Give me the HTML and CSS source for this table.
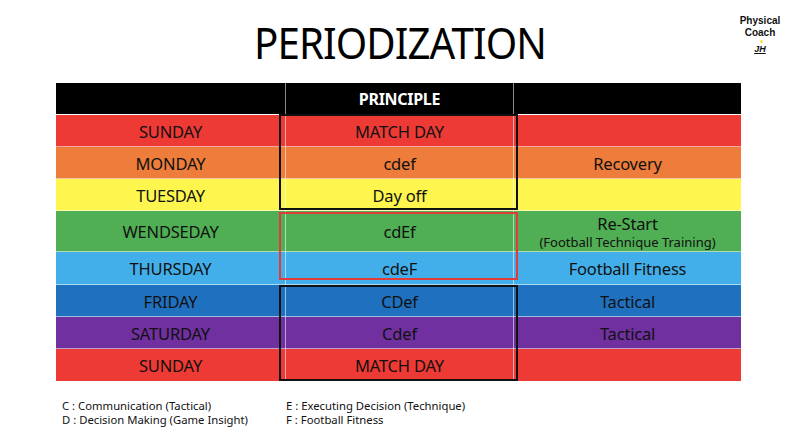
FILE: index.html
```html
<!DOCTYPE html>
<html>
<head>
<meta charset="utf-8">
<link rel="stylesheet" href="styles.css">
</head>
<body>
<div class="slide">
  <div class="coach">
    <div>Physical</div>
    <div>Coach</div>
    <div class="jh"><span class="dot"></span>JH</div>
  </div>
  <h1 class="title">PERIODIZATION</h1>
  <div class="table">
    <div class="row head"><div class="cell"></div><div class="cell mid">PRINCIPLE</div><div class="cell"></div></div>
    <div class="row red"><div class="cell">SUNDAY</div><div class="cell mid">MATCH DAY</div><div class="cell"></div></div>
    <div class="row orange"><div class="cell">MONDAY</div><div class="cell mid">cdef</div><div class="cell">Recovery</div></div>
    <div class="row yellow"><div class="cell">TUESDAY</div><div class="cell mid">Day off</div><div class="cell"></div></div>
    <div class="row green tall"><div class="cell">WENDSEDAY</div><div class="cell mid">cdEf</div><div class="cell stack"><span class="main">Re-Start</span><span class="sub">(Football Technique Training)</span></div></div>
    <div class="row sky thu"><div class="cell">THURSDAY</div><div class="cell mid">cdeF</div><div class="cell">Football Fitness</div></div>
    <div class="row blue"><div class="cell">FRIDAY</div><div class="cell mid">CDef</div><div class="cell">Tactical</div></div>
    <div class="row purple"><div class="cell">SATURDAY</div><div class="cell mid">Cdef</div><div class="cell">Tactical</div></div>
    <div class="row red last"><div class="cell">SUNDAY</div><div class="cell mid">MATCH DAY</div><div class="cell"></div></div>
    <div class="box box1"></div>
    <div class="box box2"></div>
    <div class="box box3"></div>
  </div>
  <div class="legend">
    <div class="col">
      <div>C : Communication (Tactical)</div>
      <div>D : Decision Making (Game Insight)</div>
    </div>
    <div class="col">
      <div>E : Executing Decision (Technique)</div>
      <div>F : Football Fitness</div>
    </div>
  </div>
</div>
</body>
</html>
```
FILE: styles.css
```css
html, body { margin: 0; padding: 0; background: #fff; }
.slide {
  width: 800px; height: 446px; position: relative; overflow: hidden;
  font-family: "Noto Sans", "Open Sans", sans-serif; color: #111;
}
.coach {
  position: absolute; top: 15px; left: 730px; width: 60px;
  text-align: center; font-family: "Liberation Sans", Arial, sans-serif;
  font-weight: bold; font-size: 10px; line-height: 12px; color: #111;
}
.coach .jh { font-style: italic; font-size: 9px; text-decoration: underline; margin-top: 4px; position: relative; }
.coach .dot { position: absolute; left: 30px; top: -3px; width: 3px; height: 3px; border-radius: 50%; background: #f5e332; }
.title {
  margin: 0; padding-top: 14px; height: 83px; box-sizing: border-box;
  text-align: center; font-weight: 400; font-size: 44px; line-height: 56px;
  letter-spacing: -1px; color: #000; transform: scaleX(0.915);
}
.table { position: relative; margin-left: 56px; width: 685px; }
.row { display: grid; grid-template-columns: 229px 229px 227px; height: 32px; box-shadow: inset 0 -1px 0 rgba(255,255,255,0.55); }
.cell {
  display: flex; align-items: center; justify-content: center;
  font-size: 16.5px; color: #111; letter-spacing: -0.2px;
}
.cell.mid { box-shadow: inset 1px 0 0 rgba(255,255,255,0.55), inset -1px 0 0 rgba(255,255,255,0.55); }
.head { height: 31px; background: #000; margin-bottom: 1px; box-shadow: none; }
.head .cell.mid { color: #fff; font-weight: bold; font-size: 16px; letter-spacing: -0.3px; box-shadow: inset 1px 0 0 #888, inset -1px 0 0 #888; }
.red { background: #ee3a35; }
.orange { background: #ee7d3b; }
.yellow { background: #fef64e; }
.green { background: #50ae54; }
.sky { background: #42afeb; }
.blue { background: #2070c0; }
.purple { background: #7030a0; }
.tall { height: 41px; }
.thu { height: 33px; }
.last { box-shadow: none; }
.stack { flex-direction: column; gap: 3px; padding-top: 2px; }
.stack .main { line-height: 16px; }
.stack .sub { font-size: 13px; line-height: 15px; letter-spacing: 0; }
.box { position: absolute; left: 223px; width: 239px; box-sizing: border-box; border: 2px solid #111; }
.box1 { top: 31px; height: 96px; }
.box2 { top: 129px; height: 68px; border-color: #e23c3a; }
.box3 { top: 202px; height: 96px; }
.legend {
  display: flex; margin: 18px 0 0 62px; font-size: 11.3px; line-height: 14px; color: #111;
}
.legend .col:first-child { width: 224px; }
```
